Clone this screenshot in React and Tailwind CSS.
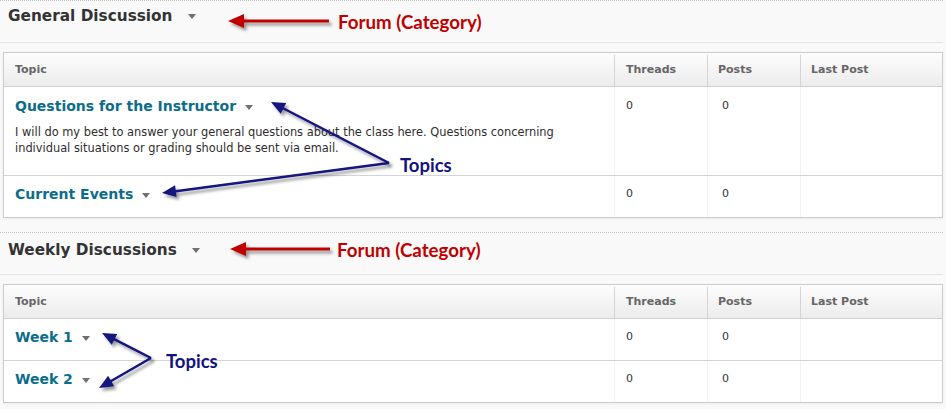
import React from 'react';

// Forum listing with two categories and their topics
const forums = [
  {
    name: 'General Discussion',
    headPt: 'pt-[6px]',
    topics: [
      {
        title: 'Questions for the Instructor',
        lines: [
          'I will do my best to answer your general questions about the class here. Questions concerning',
          'individual situations or grading should be sent via email.',
        ],
        threads: 0,
        posts: 0,
        height: 'h-[89px]',
        pt: 'pt-[10px]',
        numPt: 'pt-[11px]',
      },
      { title: 'Current Events', threads: 0, posts: 0, height: 'h-[41px]', pt: 'pt-[9px]', numPt: 'pt-[10px]' },
    ],
  },
  {
    name: 'Weekly Discussions',
    headPt: 'pt-[8px]',
    topics: [
      { title: 'Week 1', threads: 0, posts: 0, height: 'h-[42px]', pt: 'pt-[9px]', numPt: 'pt-[10px]' },
      { title: 'Week 2', threads: 0, posts: 0, height: 'h-[41px]', pt: 'pt-[9px]', numPt: 'pt-[10px]' },
    ],
  },
];

function Caret({ className = '' }) {
  return (
    <svg width="8" height="5" viewBox="0 0 8 5" className={className}>
      <polygon points="0,0 8,0 4,5" fill="#707070" />
    </svg>
  );
}

function ForumTable({ topics }) {
  return (
    <div className="ml-[3px] w-[940px] border border-[#cccccc] bg-white shadow-[0_1px_2px_rgba(0,0,0,0.06)]">
      <div className="flex h-[34px] border-b border-[#cfcfcf] bg-gradient-to-b from-[#fdfdfd] to-[#ececec] pt-[2px] text-[11px] font-bold text-[#666666]">
        <div className="flex w-[611px] items-center border-r border-[#d4d4d4] pl-[11px]">Topic</div>
        <div className="flex w-[93px] items-center border-r border-[#d4d4d4] pl-[11px]">Threads</div>
        <div className="flex w-[93px] items-center border-r border-[#d4d4d4] pl-[10px]">Posts</div>
        <div className="flex flex-1 items-center pl-[10px]">Last Post</div>
      </div>
      {topics.map((t, i) => (
        <div
          key={t.title}
          className={`flex ${t.height} ${i < topics.length - 1 ? 'border-b border-[#d4d4d4]' : ''}`}
        >
          <div className={`w-[611px] border-r border-[#f3f3f3] pl-[11px] ${t.pt}`}>
            <div className="flex items-center leading-[18px]">
              <span className="text-[14px] font-bold text-[#0b6d8a]">{t.title}</span>
              <Caret className="ml-[9px] mt-[2px]" />
            </div>
            {t.lines && (
              <p className="mt-[9px] text-[11.4px] leading-[16px] text-[#2e2e2e]">
                {t.lines[0]}
                <br />
                {t.lines[1]}
              </p>
            )}
          </div>
          <div className={`w-[93px] border-r border-[#f3f3f3] pl-[11px] text-[11px] leading-[16px] text-[#333333] ${t.numPt}`}>
            {t.threads}
          </div>
          <div className={`w-[93px] border-r border-[#f3f3f3] pl-[14px] text-[11px] leading-[16px] text-[#333333] ${t.numPt}`}>
            {t.posts}
          </div>
          <div className="flex-1" />
        </div>
      ))}
    </div>
  );
}

function Arrow({ from, to, color, width = 2.5, head = 15, half = 6.5 }) {
  const dx = to[0] - from[0];
  const dy = to[1] - from[1];
  const len = Math.hypot(dx, dy);
  const ux = dx / len;
  const uy = dy / len;
  const bx = to[0] - ux * head;
  const by = to[1] - uy * head;
  const p1 = [bx - uy * half, by + ux * half];
  const p2 = [bx + uy * half, by - ux * half];
  return (
    <g filter="url(#shadow)">
      <line x1={from[0]} y1={from[1]} x2={bx + ux * 2} y2={by + uy * 2} stroke={color} strokeWidth={width} />
      <polygon points={`${to[0]},${to[1]} ${p1[0]},${p1[1]} ${p2[0]},${p2[1]}`} fill={color} />
    </g>
  );
}

function Annotations() {
  const red = '#c00000';
  const navy = '#13137f';
  return (
    <div className="pointer-events-none absolute inset-0">
      <svg width="946" height="409" className="absolute left-0 top-0">
        <defs>
          <filter id="shadow" x="-20%" y="-50%" width="140%" height="200%">
            <feDropShadow dx="2.5" dy="3" stdDeviation="1.6" floodColor="#000" floodOpacity="0.4" />
          </filter>
        </defs>
        <Arrow from={[329, 21]} to={[228, 21]} color={red} width={3} head={16} half={7} />
        <Arrow from={[330, 249]} to={[230, 249]} color={red} width={3} head={16} half={7} />
        <Arrow from={[389, 163]} to={[271, 102]} color={navy} head={14} half={6} />
        <Arrow from={[389, 163]} to={[162, 193]} color={navy} head={14} half={6} />
        <Arrow from={[151, 358]} to={[102, 333]} color={navy} head={14} half={6} />
        <Arrow from={[151, 358]} to={[99, 388]} color={navy} head={14} half={6} />
      </svg>
      <div className="absolute left-[338px] top-[13px] font-['Lato',sans-serif] text-[18.7px] font-bold leading-[18px] text-[#c00000]">
        Forum (Category)
      </div>
      <div className="absolute left-[337px] top-[241px] font-['Lato',sans-serif] text-[18.7px] font-bold leading-[18px] text-[#c00000]">
        Forum (Category)
      </div>
      <div className="absolute left-[400px] top-[156px] font-['Lato',sans-serif] text-[18.5px] font-bold leading-[18px] text-[#13137f]">
        Topics
      </div>
      <div className="absolute left-[166px] top-[352px] font-['Lato',sans-serif] text-[18.5px] font-bold leading-[18px] text-[#13137f]">
        Topics
      </div>
    </div>
  );
}

export default function App() {
  return (
    <div className="relative h-[409px] w-[946px] overflow-hidden bg-[#f9f9f9] font-['DejaVu_Sans',Verdana,sans-serif]">
      {forums.map((f, i) => (
        <section key={f.name} className={i > 0 ? 'mt-[14px]' : ''}>
          <div className="w-[943px] border-t border-dotted border-[#c4c4c4]">
            <div className={`flex h-[42px] items-start border-b border-[#e6e6e6] pl-[8px] ${f.headPt}`}>
              <h2 className="text-[15.3px] font-bold leading-[18px] text-[#333333]">{f.name}</h2>
              <Caret className="ml-[15px] mt-[7px]" />
            </div>
          </div>
          <div className="mt-[9px]">
            <ForumTable topics={f.topics} />
          </div>
        </section>
      ))}
      <Annotations />
    </div>
  );
}
